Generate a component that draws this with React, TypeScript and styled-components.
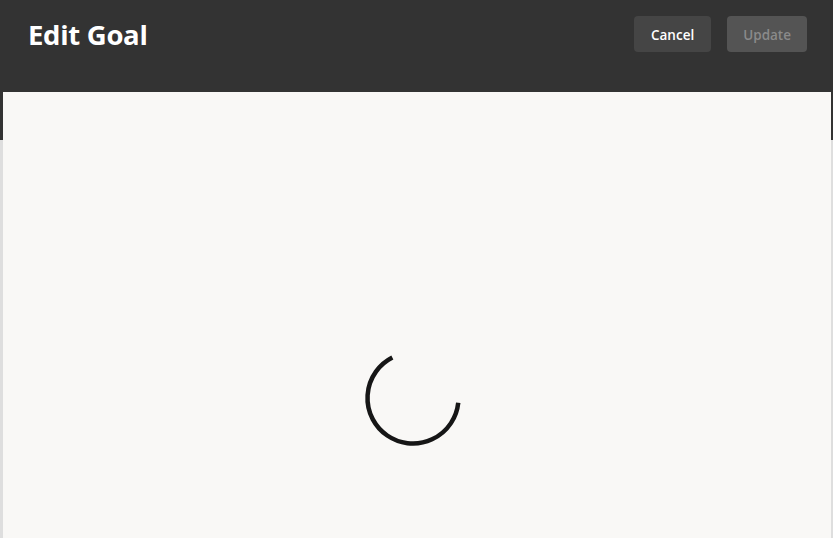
import React, { FC } from 'react';
import styled, { createGlobalStyle } from 'styled-components';

const GlobalStyle = createGlobalStyle`
    html, body {
        margin: 0;
        padding: 0;
        height: 100%;
        background: #dedede;
        font-family: "Open Sans", "Noto Sans", Arial, sans-serif;
    }

    #root {
        height: 100%;
    }
`;

const Page = styled.div`
    position: relative;
    height: 538px;
    overflow: hidden;
    display: flex;
    flex-direction: column;
    background: linear-gradient(#333333 0, #333333 140px, #dedede 140px);
`;

const Header = styled.header`
    height: 92px;
    flex-shrink: 0;
    display: flex;
    align-items: flex-start;
    justify-content: space-between;
    padding: 0 26px 0 28px;
    box-sizing: border-box;
`;

const Title = styled.h1`
    margin: 16px 0 0;
    color: #ffffff;
    font-size: 27.5px;
    font-weight: 700;
    letter-spacing: -0.3px;
    line-height: 38px;
`;

const Actions = styled.div`
    display: flex;
    gap: 16px;
    margin-top: 16px;
`;

const Button = styled.button<{ $disabled?: boolean }>`
    height: 36px;
    padding: 2px ${p => (p.$disabled ? '16px' : '17px')} 0;
    border: none;
    border-radius: 4px;
    font-family: inherit;
    font-size: 13.5px;
    font-weight: 600;
    background: ${p => (p.$disabled ? '#545454' : '#454545')};
    color: ${p => (p.$disabled ? '#8a8a8a' : '#ffffff')};
    cursor: ${p => (p.$disabled ? 'default' : 'pointer')};
`;

const Panel = styled.main`
    flex: 1;
    margin: 0 2px 0 3px;
    background: #f9f8f6;
    display: flex;
    align-items: flex-start;
    justify-content: center;
`;

const SpinnerWrap = styled.div`
    margin-top: 256px;
    margin-left: -8px;
    width: 100px;
    height: 100px;
`;

const Spinner: FC = () => {
    // arc from about -117deg round the bottom to +6deg
    const r = 45.5;
    const cx = 50;
    const cy = 50;
    const a1 = (6 * Math.PI) / 180;
    const a2 = (-117 * Math.PI) / 180;
    const x1 = cx + r * Math.cos(a1);
    const y1 = cy + r * Math.sin(a1);
    const x2 = cx + r * Math.cos(a2);
    const y2 = cy + r * Math.sin(a2);
    return (
        <SpinnerWrap>
            <svg width="100" height="100" viewBox="0 0 100 100">
                <path
                    d={`M ${x1} ${y1} A ${r} ${r} 0 1 1 ${x2} ${y2}`}
                    fill="none"
                    stroke="#161616"
                    strokeWidth="4.5"
                />
            </svg>
        </SpinnerWrap>
    );
};

const App: FC = () => {
    return (<>
        <GlobalStyle />
        <Page>
            <Header>
                <Title>Edit Goal</Title>
                <Actions>
                    <Button>Cancel</Button>
                    <Button $disabled disabled>Update</Button>
                </Actions>
            </Header>
            <Panel>
                <Spinner />
            </Panel>
        </Page>
    </>);
};

export default App;
